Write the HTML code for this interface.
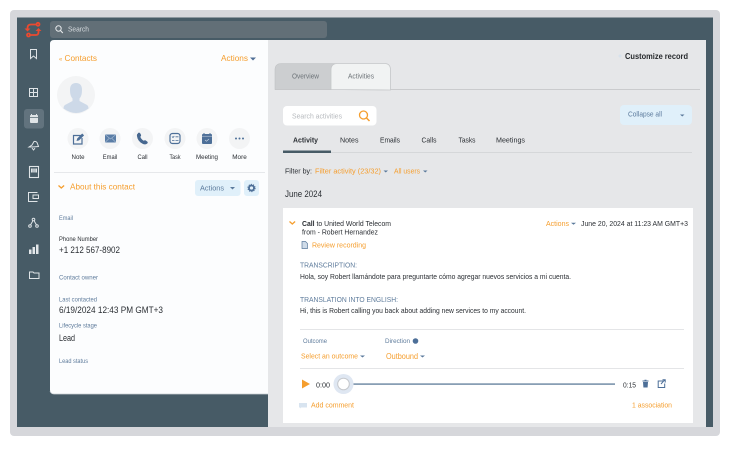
<!DOCTYPE html>
<html><head><meta charset="utf-8"><style>
html,body{margin:0;padding:0;background:#fff;width:731px;height:450px;overflow:hidden}
svg{display:block;font-family:"Liberation Sans",sans-serif}
.o{fill:#f59e2e}.d{fill:#2b2f34}.b{fill:#5f7c9c}
</style></head><body>
<svg width="731" height="450" viewBox="0 0 731 450" xmlns="http://www.w3.org/2000/svg">
<rect x="10" y="10" width="710" height="426" rx="4" fill="#d6d7db"/>
<rect x="17" y="17" width="696" height="410" fill="#475b66"/>
<rect x="17" y="17" width="696" height="1" fill="#8d989f"/>
<!-- search -->
<rect x="50" y="21" width="277" height="17" rx="3" fill="#626f77"/>
<circle cx="58.500" cy="28.500" r="2.700" fill="none" stroke="#e6e9eb" stroke-width="1"/><path d="M60.500 30.500l2.300 2.500" stroke="#e6e9eb" stroke-width="1.100"/>
<text x="68" y="31.500" font-size="7" fill="#d5dade" textLength="21" lengthAdjust="spacingAndGlyphs">Search</text>
<!-- logo -->
<g fill="none" stroke="#ea4a30" stroke-width="1.800"><path d="M36.500 24.500H31q-3.500 0-3.500 3.500v1.500"/><path d="M30 35h6q2.500 0 2.500-3v-2"/><circle cx="38" cy="24.300" r="1.500"/><circle cx="28.500" cy="35" r="1.500"/></g>
<path d="M24.500 28.500h6l-3 3zM35.500 31h6l-3-3z" fill="#ea4a30"/>
<!-- sidebar -->
<g fill="none" stroke="#dfe4e7" stroke-width="1">
<path d="M30.500 49.500h6v9l-3-2.500-3 2.500z"/>
<rect x="29.500" y="88.500" width="8" height="8"/><path d="M33.500 88.500v8M29.500 92.500h8"/>
</g>
<rect x="24" y="109" width="20" height="19.500" rx="3" fill="#62737e"/>
<rect x="30" y="115" width="8" height="8" rx="1" fill="#dfe4e7"/><path d="M30 117.500h8" stroke="#62737e" stroke-width=".8"/><path d="M31.500 114v2M36.500 114v2" stroke="#dfe4e7"/>
<g fill="none" stroke="#dfe4e7" stroke-width="1">
<path d="M29 147l3-2 2-3.500q2-.5 3 1l1.500 4q-4 .5-9.500.5zM32 148l1.500 2 1.500-1.800"/>
<rect x="29.500" y="166.500" width="9" height="11" fill="#475b66" stroke-width="1.100"/>
<path d="M37.500 192.500h-9v9h9M38.500 195h-5.500v3.500h5.500z"/>
<circle cx="33.500" cy="219.500" r="1.300"/><circle cx="30" cy="226" r="1.300"/><circle cx="37" cy="226" r="1.300"/><path d="M32.800 221l-2.200 3.800M34.200 221l2.200 3.800"/>
<path d="M29.500 272h3.500l1 1h5v5.500h-9.500z"/>
</g>
<path d="M31 168.500h6v4h-6z" fill="#dfe4e7"/><path d="M33 168.500v4M35 168.500v4" stroke="#475b66" stroke-width=".5"/>
<path d="M29 249.500h2.500v4.500H29zM32.500 247h2.500v7h-2.500zM36 244.500h2.500v9.500H36z" fill="#e3e7ea"/>
<!-- left panel -->
<path d="M50 44q0-4 4-4h214v354H54q-4 0-4-4z" fill="#fcfdfe"/>
<path d="M268 394H54q-3 0-4-3" fill="none" stroke="#c9cfd3" stroke-width=".7"/>
<text x="59" y="61" font-size="8.500" class="o" textLength="38" lengthAdjust="spacingAndGlyphs"><tspan font-size="6">«</tspan> Contacts</text>
<text x="221" y="61" font-size="8.500" class="o" textLength="27" lengthAdjust="spacingAndGlyphs">Actions</text>
<path d="M250 57.500h6l-3 3z" fill="#506f96"/>
<circle cx="76" cy="95" r="19" fill="#f3f4f5"/>
<path d="M76 83q6 0 6 7 0 6-2.500 8.500v2.500l7.500 4q1.500 1 1.500 3.500-6.500 4.500-12.500 4.500t-12.500-4.500q0-2.500 1.500-3.500l7.500-4v-2.500q-2.500-2.500-2.500-8.500 0-7 6-7z" fill="#cdd9e8"/>
<g fill="#f3f4f5"><circle cx="78" cy="138.500" r="10.500"/><circle cx="110" cy="138.500" r="10.500"/><circle cx="142.500" cy="138.500" r="10.500"/><circle cx="175" cy="138.500" r="10.500"/><circle cx="207" cy="138.500" r="10.500"/><circle cx="239.500" cy="138.500" r="10.500"/></g>
<path d="M81 135.500h-7.500v8.500h8.500v-6" fill="none" stroke="#4d6f98" stroke-width="1.200"/><path d="M76.500 141l.7-2.500 5-5 1.900 1.900-5 5z" fill="#4d6f98"/>
<rect x="105" y="134.500" width="11" height="8" fill="#5a7da6"/><path d="M105 134.500l5.500 4.500 5.500-4.500M105 142.500l4-4M116 142.500l-4-4" fill="none" stroke="#a9bdd4" stroke-width=".6"/>
<path d="M138 133q1.500-1 2.300.5l.8 1.500q.2 1-.8 1.800.8 2.500 3.500 4 1-.9 1.800-.4l1.700 1.200q1 1-.2 2-2 1.500-4.500.2-5-2.500-5.700-8-.2-1.600 1-2.300z" fill="#46678f"/>
<rect x="170" y="133.500" width="10" height="10" rx="2.500" fill="none" stroke="#4d6f98" stroke-width="1.200"/><path d="M172 136.500l1 1 1.300-1.500M175.500 136.800h3M172 140.500h2.500M175.500 140.500h3" stroke="#4d6f98" stroke-width=".8" fill="none"/>
<rect x="202" y="134" width="10" height="10" rx="1" fill="#4d6f98"/><path d="M204 133v2M210 133v2" stroke="#4d6f98"/><path d="M202 136.200h10" stroke="#cfd9e5" stroke-width=".5"/><path d="M205 140l1.500 1.200 2.500-2.200" stroke="#cfd9e5" stroke-width=".6" fill="none"/>
<g fill="#4d6f98"><circle cx="236" cy="138.500" r="1"/><circle cx="239.500" cy="138.500" r="1"/><circle cx="243" cy="138.500" r="1"/></g>
<g font-size="6.500" class="d" text-anchor="middle"><text x="78" y="159" textLength="13" lengthAdjust="spacingAndGlyphs">Note</text><text x="110" y="159" textLength="14.500" lengthAdjust="spacingAndGlyphs">Email</text><text x="142.500" y="159" textLength="10" lengthAdjust="spacingAndGlyphs">Call</text><text x="175" y="159" textLength="11" lengthAdjust="spacingAndGlyphs">Task</text><text x="207" y="159" textLength="22" lengthAdjust="spacingAndGlyphs">Meeting</text><text x="239.500" y="159" textLength="14.500" lengthAdjust="spacingAndGlyphs">More</text></g>
<rect x="54" y="172" width="211" height="1" fill="#e6e8eb"/>
<path d="M58.500 185.500l2.800 2.500 2.800-2.500" fill="none" stroke="#f59e2e" stroke-width="1.300"/>
<text x="70" y="189.500" font-size="8.500" class="o" textLength="65" lengthAdjust="spacingAndGlyphs">About this contact</text>
<rect x="195" y="180" width="45.500" height="16" rx="3" fill="#e0f0fa"/>
<text x="200" y="190.500" font-size="7.500" fill="#5b7a9c" textLength="24" lengthAdjust="spacingAndGlyphs">Actions</text>
<path d="M230 187h5l-2.500 2.500z" fill="#5b7a9c"/>
<rect x="244" y="180" width="15" height="16" rx="3" fill="#e0f0fa"/>
<circle cx="251.500" cy="188" r="2.500" fill="none" stroke="#4d6f98" stroke-width="1.800"/><circle cx="251.500" cy="188" r="3.600" fill="none" stroke="#4d6f98" stroke-width="1" stroke-dasharray="1.200 1.100"/>
<g font-size="6.500"><text x="59" y="220" class="b" textLength="14" lengthAdjust="spacingAndGlyphs">Email</text>
<text x="59" y="241" class="d" textLength="39" lengthAdjust="spacingAndGlyphs">Phone Number</text>
<text x="59" y="279.500" class="b" textLength="39" lengthAdjust="spacingAndGlyphs">Contact owner</text>
<text x="59" y="301.500" class="b" textLength="38" lengthAdjust="spacingAndGlyphs">Last contacted</text>
<text x="59" y="327.500" class="b" textLength="38" lengthAdjust="spacingAndGlyphs">Lifecycle stage</text>
<text x="59" y="363" class="b" textLength="29" lengthAdjust="spacingAndGlyphs">Lead status</text></g>
<g font-size="9" class="d"><text x="59" y="253" textLength="61" lengthAdjust="spacingAndGlyphs">+1 212 567-8902</text>
<text x="59" y="313" textLength="104" lengthAdjust="spacingAndGlyphs">6/19/2024  12:43 PM GMT+3</text>
<text x="59" y="341" textLength="16" lengthAdjust="spacingAndGlyphs">Lead</text></g>
<!-- right panel -->
<rect x="268" y="40" width="438" height="387" fill="#e6e7e9"/>
<circle cx="620" cy="56" r="1.500" fill="#d8e2ec"/>
<text x="625" y="59" font-size="8.500" font-weight="bold" fill="#26292c" textLength="63" lengthAdjust="spacingAndGlyphs">Customize record</text>
<rect x="275" y="89" width="425" height="1" fill="#cacbcd"/>
<path d="M275 89.500V70q0-6.500 6.500-6.500H335V89.500z" fill="#ccced0" stroke="#bfc1c3" stroke-width=".6"/>
<path d="M331 89.500V70q0-6.500 6.500-6.500h47q6 0 6 6.500v20z" fill="#f1f3f3" stroke="#c5c7c9" stroke-width=".8"/>
<text x="292" y="78.500" font-size="7" fill="#6d7378" textLength="27" lengthAdjust="spacingAndGlyphs">Overview</text>
<text x="348" y="78.500" font-size="7" fill="#6d7378" textLength="26" lengthAdjust="spacingAndGlyphs">Activities</text>
<rect x="283" y="106" width="93.500" height="19.500" rx="4" fill="#fff"/>
<text x="292" y="118.500" font-size="7.500" fill="#b7babe" textLength="50" lengthAdjust="spacingAndGlyphs">Search activities</text>
<circle cx="363.500" cy="115" r="4" fill="none" stroke="#f59e2e" stroke-width="1.300"/><path d="M366.500 118l3 3" stroke="#f59e2e" stroke-width="1.500"/>
<rect x="620" y="105" width="72" height="20" rx="4" fill="#e0f0fa"/>
<text x="628" y="116.500" font-size="7.500" fill="#5b7a9c" textLength="34" lengthAdjust="spacingAndGlyphs">Collapse all</text>
<path d="M680 114.500h4.500l-2.250 2z" fill="#5b7a9c"/>
<g font-size="7.500" class="d"><text x="293" y="142.500" font-weight="bold" textLength="25" lengthAdjust="spacingAndGlyphs">Activity</text><text x="340" y="142.500" textLength="18.500" lengthAdjust="spacingAndGlyphs">Notes</text><text x="380" y="142.500" textLength="20" lengthAdjust="spacingAndGlyphs">Emails</text><text x="421.500" y="142.500" textLength="15" lengthAdjust="spacingAndGlyphs">Calls</text><text x="458.500" y="142.500" textLength="17" lengthAdjust="spacingAndGlyphs">Tasks</text><text x="496" y="142.500" textLength="29" lengthAdjust="spacingAndGlyphs">Meetings</text></g>
<rect x="283" y="152" width="409" height="1" fill="#d5d7d9"/>
<rect x="283" y="150.500" width="48" height="2.500" fill="#475b66"/>
<text x="285" y="173.500" font-size="7.500" class="d" textLength="27" lengthAdjust="spacingAndGlyphs">Filter by:</text>
<text x="315" y="173.500" font-size="7.500" class="o" textLength="66" lengthAdjust="spacingAndGlyphs">Filter activity (23/32)</text>
<path d="M383.500 170.500h4.500l-2.250 2z" fill="#5b7a9c"/>
<text x="394" y="173.500" font-size="7.500" class="o" textLength="26" lengthAdjust="spacingAndGlyphs">All users</text>
<path d="M423 170.500h4.500l-2.250 2z" fill="#5b7a9c"/>
<text x="285" y="197" font-size="9" class="d" textLength="37" lengthAdjust="spacingAndGlyphs">June 2024</text>
<!-- card -->
<rect x="283" y="208" width="410" height="215" fill="#fff"/>
<path d="M289.500 221.500l2.800 2.500 2.800-2.500" fill="none" stroke="#f59e2e" stroke-width="1.300"/>
<text x="302" y="226" font-size="7.500" class="d" textLength="89" lengthAdjust="spacingAndGlyphs"><tspan font-weight="bold">Call</tspan> to United World Telecom</text>
<text x="302" y="234.500" font-size="7.500" class="d" textLength="76" lengthAdjust="spacingAndGlyphs">from - Robert Hernandez</text>
<path d="M302 241.500h3.500l2 2v5h-5.500z" fill="#cfdbe8" stroke="#5b7a9c" stroke-width=".7"/>
<text x="312" y="247.500" font-size="7.500" class="o" textLength="54" lengthAdjust="spacingAndGlyphs">Review recording</text>
<text x="546" y="226" font-size="7.500" class="o" textLength="23" lengthAdjust="spacingAndGlyphs">Actions</text>
<path d="M571 222.800h5l-2.500 2z" fill="#5b7a9c"/>
<text x="581" y="226" font-size="7.500" class="d" textLength="107" lengthAdjust="spacingAndGlyphs">June 20, 2024 at 11:23 AM GMT+3</text>
<text x="300" y="267.500" font-size="7.500" class="b" textLength="57" lengthAdjust="spacingAndGlyphs">TRANSCRIPTION:</text>
<text x="300" y="279" font-size="7.500" class="d" textLength="271" lengthAdjust="spacingAndGlyphs">Hola, soy Robert llamándote para preguntarte cómo agregar nuevos servicios a mi cuenta.</text>
<text x="300" y="302" font-size="7.500" class="b" textLength="98" lengthAdjust="spacingAndGlyphs">TRANSLATION INTO ENGLISH:</text>
<text x="300" y="313" font-size="7.500" class="d" textLength="226" lengthAdjust="spacingAndGlyphs">Hi, this is Robert calling you back about adding new services to my account.</text>
<rect x="300" y="329" width="384" height="1" fill="#e4e5e7"/>
<text x="303" y="343" font-size="6.500" class="b" textLength="24" lengthAdjust="spacingAndGlyphs">Outcome</text>
<text x="385" y="343" font-size="6.500" class="b" textLength="25" lengthAdjust="spacingAndGlyphs">Direction</text>
<circle cx="415.500" cy="341" r="2.800" fill="#4d6f98"/>
<text x="301" y="358.500" font-size="7.500" class="o" textLength="57" lengthAdjust="spacingAndGlyphs">Select an outcome</text>
<path d="M360 355.500h5l-2.500 2z" fill="#5b7a9c"/>
<text x="386" y="359" font-size="8" class="o" textLength="32" lengthAdjust="spacingAndGlyphs">Outbound</text>
<path d="M420 355.500h5l-2.500 2z" fill="#5b7a9c"/>
<rect x="300" y="368" width="384" height="1" fill="#e4e5e7"/>
<path d="M302 379.500l8 4.500-8 4.500z" fill="#f59e2e"/>
<text x="316" y="387.500" font-size="7.500" class="d" textLength="14" lengthAdjust="spacingAndGlyphs">0:00</text>
<circle cx="343.500" cy="384" r="10" fill="#dfe7f2"/>
<circle cx="343.500" cy="384" r="5.800" fill="#fff" stroke="#c5c8cc" stroke-width="1"/>
<rect x="353.500" y="383.300" width="261.500" height="1.600" fill="#7c93ac"/>
<text x="623" y="387.500" font-size="7.500" class="d" textLength="13" lengthAdjust="spacingAndGlyphs">0:15</text>
<path d="M642.500 380.500h6v1h-6zM643 382h5l-.4 5.500h-4.200zM644.500 379.800h2v1h-2z" fill="#4d6f98"/>
<path d="M663 381h-4.800v6.500h6.500v-4" fill="none" stroke="#4d6f98" stroke-width="1"/><path d="M661 384l3.500-4M662.500 379.800h2.700v2.700" fill="none" stroke="#4d6f98" stroke-width="1"/>
<path d="M299 403h8v4.500h-6l-1 1v-1h-1z" fill="#d8e4f0"/>
<text x="311" y="407.500" font-size="7.500" class="o" textLength="43" lengthAdjust="spacingAndGlyphs">Add comment</text>
<text x="632" y="407.500" font-size="7.500" class="o" textLength="40" lengthAdjust="spacingAndGlyphs">1 association</text>
</svg>
</body></html>
